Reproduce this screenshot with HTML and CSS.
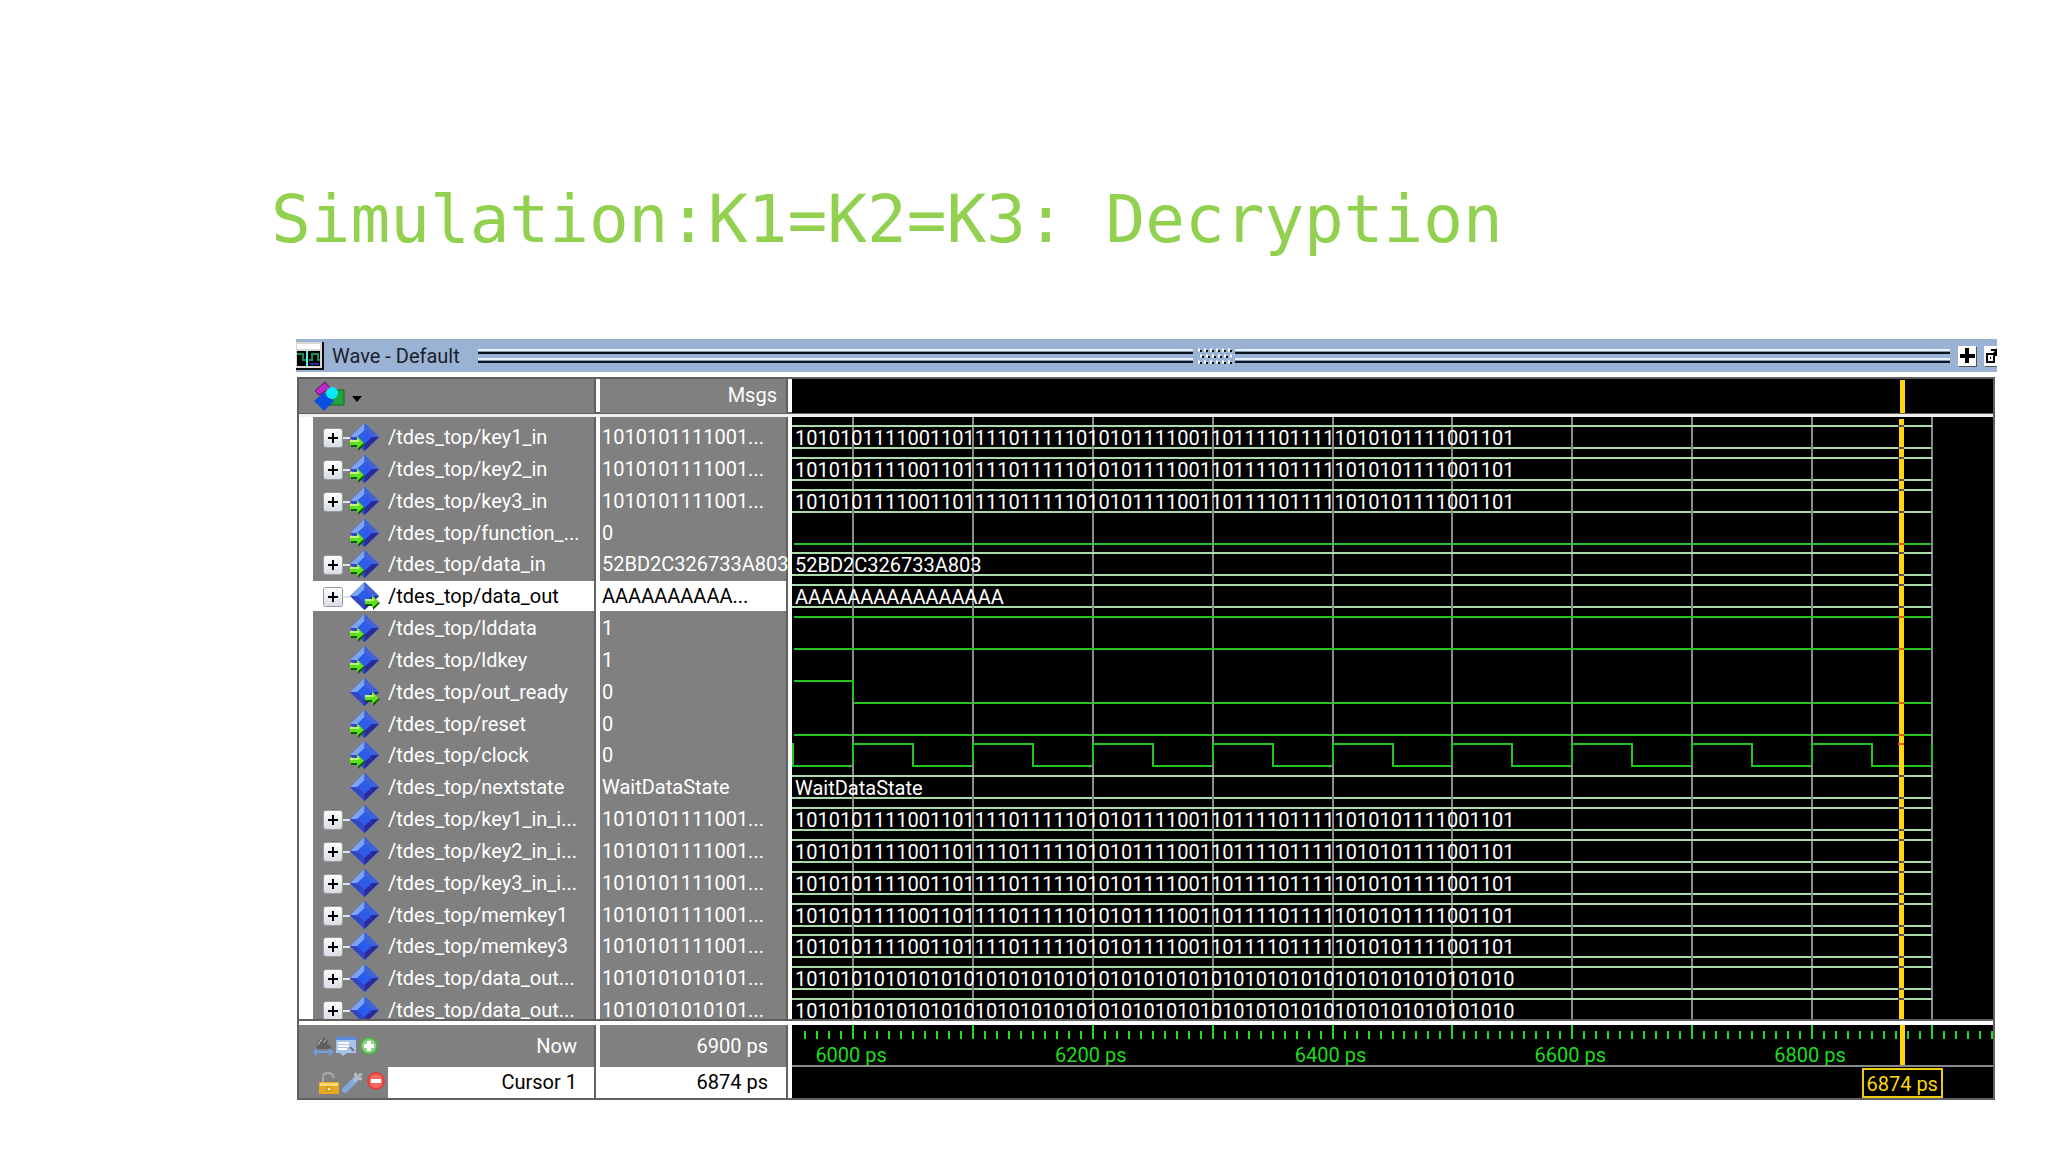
FILE: index.html
```
<!DOCTYPE html>
<html lang="en">
<head>
    <meta charset="UTF-8">
    <meta name="viewport" content="width=device-width, initial-scale=1.0">
    <title>Simulation: Decryption</title>
    <link rel="stylesheet" href="styles.css">
</head>
<body>
    <!-- Shared icons -->
    <svg class="sprite" aria-hidden="true">
        <symbol id="diamond" viewBox="0 0 29 28">
            <path d="M14.5 0L29 14L14.5 28L0 14Z" fill="#2b5cea"/>
            <path d="M14.5 0L0 14L7 14L14.5 7Z" fill="#7fa4f5"/>
            <path d="M14.5 0L29 14L22 14L14.5 7Z" fill="#3f62d8"/>
            <path d="M0 14L14.5 28L14.5 21L7 14Z" fill="#3347c4"/>
            <path d="M29 14L14.5 28L14.5 21L22 14Z" fill="#2a2a9c"/>
        </symbol>
        <symbol id="arrow" viewBox="0 0 15 15">
            <path d="M1 5H7V1L15 8L8 15V11H1Z" fill="#0c5a08"/>
            <path d="M0 4H7V0L14 7L7 13V9H0Z" fill="#5fe01a"/>
            <path d="M0 4H7V2L10 5L8 6H0Z" fill="#c3f77a"/>
        </symbol>
    </svg>

    <main class="slide">
        <h1>Simulation:K1=K2=K3: Decryption</h1>

        <section class="wave-window">
            <header class="titlebar">
                <svg class="app-icon" viewBox="0 0 28 28" aria-hidden="true">
                    <path d="M0 0H28V28H0Z" fill="#111"/>
                    <path d="M0 0H26V26H0Z" fill="#d8d8d4"/>
                    <path d="M1 2H24V7H1Z" fill="#fff"/>
                    <path d="M1 9H24V24H1Z" fill="#000"/>
                    <path d="M1 12H7V18H10M13 18H16V12H22V18H24" fill="none" stroke="#1c8c4c" stroke-width="2"/>
                    <path d="M14 22H23" stroke="#2a2a9c" stroke-width="2"/>
                    <path d="M11 9V24" stroke="#5fe8f0" stroke-width="2"/>
                </svg>
                <span class="title">Wave - Default</span>
                <span class="ridge"></span>
                <svg class="grip" viewBox="0 0 36 16" aria-hidden="true">
                    <path d="M2 2H34M4 8H36M2 14H34" stroke="#fff" stroke-width="3" stroke-dasharray="2 4"/>
                    <path d="M4 3H36M6 9H36M4 15H36" stroke="#111" stroke-width="2" stroke-dasharray="2 4"/>
                </svg>
                <span class="ridge"></span>
                <button class="tool-btn" aria-label="Zoom window">
                    <svg viewBox="0 0 18 20"><path d="M9 2V17M2 10H17" stroke="#000" stroke-width="4"/></svg>
                </button>
                <button class="tool-btn cut" aria-label="Undock window">
                    <svg viewBox="0 0 18 20"><path d="M3 8H10V16H3ZM6 12H7M7 4H13M9 9L12 5V10" fill="none" stroke="#000" stroke-width="2"/></svg>
                </button>
            </header>

            <table class="wave-table">
                <thead>
                    <tr>
                        <th class="name">
                            <button class="menu-btn" aria-label="Signal filter">
                                <svg viewBox="0 0 50 30" aria-hidden="true">
                                    <path d="M17 9H30V24H14Z" fill="#1fa33c" stroke="#0c6a24"/>
                                    <path d="M1 10L11 1L16 7L5 14Z" fill="#c026c8" stroke="#5c0a68"/>
                                    <path d="M10 11L20 20L10 30L0 20Z" fill="#0a50e0"/>
                                    <circle cx="18" cy="12" r="6" fill="#08e8fa"/>
                                    <path d="M38 15H48L43 21Z" fill="#000"/>
                                </svg>
                            </button>
                        </th>
                        <th class="value">Msgs</th>
                        <th class="wave"><i class="cursor-line"></i></th>
                    </tr>
                </thead>
                <tbody id="signals"></tbody>
                <tfoot>
                    <tr class="now-row">
                        <th class="name">
                            <svg class="foot-icons" viewBox="0 0 66 20" aria-hidden="true">
                                <path d="M2 13L5 4L8 6L10 1L14 4L13 8L17 10V13Z" fill="#5e5e62"/>
                                <path d="M4 9L7 4M10 7L12 3" stroke="#c8c8c8"/>
                                <path d="M0 16H18M3 13L0 16L3 19M15 13L18 16L15 19" fill="none" stroke="#6f9fdc" stroke-width="2"/>
                                <path d="M22 2H42V17H33L29 20L26 17H22Z" fill="#a9c4ec"/>
                                <path d="M22 1H42V4H22Z" fill="#5b8be0"/>
                                <path d="M24 7H35M24 10H35M24 13H33" stroke="#fff" stroke-width="2"/>
                                <path d="M36 11L40 15" stroke="#777" stroke-width="2"/>
                                <circle cx="55" cy="10" r="9" fill="#4fb24c"/>
                                <circle cx="55" cy="10" r="7" fill="#8fd488"/>
                                <path d="M55 5V15M50 10H60" stroke="#fff" stroke-width="4"/>
                            </svg>
                            <span>Now</span>
                        </th>
                        <td class="value">6900 ps</td>
                        <td class="wave" id="ruler"><i class="cursor-line"></i></td>
                    </tr>
                    <tr class="cursor-row">
                        <th class="name">
                            <svg class="foot-icons" viewBox="0 0 66 22" aria-hidden="true">
                                <path d="M4 10V5Q4 1 9 1Q14 1 15 6" fill="none" stroke="#a8a8a8" stroke-width="2"/>
                                <path d="M0 10H20V22H0Z" fill="#e9a823"/>
                                <path d="M1 11H19V14H1Z" fill="#fbd872"/>
                                <path d="M8 15H12V19H8Z" fill="#fff0b8" stroke="#b87a10"/>
                                <path d="M26 18L36 8" stroke="#86a8e0" stroke-width="6" stroke-linecap="round"/>
                                <path d="M35 9L39 5M37 1Q35 7 43 7M39 4L43 2" fill="none" stroke="#b4bcc8" stroke-width="3"/>
                                <circle cx="57" cy="9" r="9" fill="#e23c3c"/>
                                <circle cx="57" cy="9" r="7" fill="#f06a62"/>
                                <path d="M52 9H62" stroke="#fff" stroke-width="4"/>
                            </svg>
                            <span>Cursor 1</span>
                        </th>
                        <td class="value">6874 ps</td>
                        <td class="wave"><output class="cursor-tag">6874 ps</output></td>
                    </tr>
                </tfoot>
            </table>
        </section>
    </main>

    <script>
        // visible time range in ps
        const START = 5949;
        const SPAN = 1002;
        const END = 6900;
        const CURSOR = 6874;

        const KEY = '1010101111001101111011111010101111001101111011111010101111001101';
        const ALT = '10'.repeat(32);

        // kind: in / out / net, wave: bus, or level at the start followed by change times
        const signals = [
            { name: 'key1_in', kind: 'in', bus: KEY, value: '1010101111001...' },
            { name: 'key2_in', kind: 'in', bus: KEY, value: '1010101111001...' },
            { name: 'key3_in', kind: 'in', bus: KEY, value: '1010101111001...' },
            { name: 'function_...', kind: 'in', level: 0, edges: [], value: '0' },
            { name: 'data_in', kind: 'in', bus: '52BD2C326733A803', value: '52BD2C326733A803' },
            { name: 'data_out', kind: 'out', bus: 'AAAAAAAAAAAAAAAA', value: 'AAAAAAAAAA...', selected: true },
            { name: 'lddata', kind: 'in', level: 1, edges: [], value: '1' },
            { name: 'ldkey', kind: 'in', level: 1, edges: [], value: '1' },
            { name: 'out_ready', kind: 'out', level: 1, edges: [6000], value: '0' },
            { name: 'reset', kind: 'in', level: 0, edges: [], value: '0' },
            { name: 'clock', kind: 'in', level: 1, edges: [], clock: true, value: '0' },
            { name: 'nextstate', kind: 'net', bus: 'WaitDataState', flat: true, value: 'WaitDataState' },
            { name: 'key1_in_i...', kind: 'net', bus: KEY, value: '1010101111001...' },
            { name: 'key2_in_i...', kind: 'net', bus: KEY, value: '1010101111001...' },
            { name: 'key3_in_i...', kind: 'net', bus: KEY, value: '1010101111001...' },
            { name: 'memkey1', kind: 'net', bus: KEY, value: '1010101111001...' },
            { name: 'memkey3', kind: 'net', bus: KEY, value: '1010101111001...' },
            { name: 'data_out...', kind: 'net', bus: ALT, value: '1010101010101...' },
            { name: 'data_out...', kind: 'net', bus: ALT, value: '1010101010101...' }
        ];

        // clock toggles every 50 ps
        for (let t = START + 1; t <= END; t += 50) {
            signals[10].edges.push(t);
        }

        function plot(signal) {
            let grid = '';
            for (let t = 6000; t <= END; t += 100) {
                grid += `M${t} -8V40`;
            }

            let trace = '';
            let cross = '';
            const hit = y => `M${CURSOR - 2} ${y}h5`;
            if (signal.bus) {
                trace = `M${START} 4H${END}M${START} 26H${END}`;
                cross = hit(4) + hit(26);
            } else {
                let level = signal.level;
                const y = () => level ? 4 : 26;
                trace = `M${signal.clock ? START : START + 2} ${y()}`;
                signal.edges.forEach(t => {
                    trace += `H${t}`;
                    level = 1 - level;
                    trace += `V${y()}`;
                });
                trace += `H${END}`;
                cross = hit(y());
            }

            return `
                <svg class="plot" viewBox="${START} 0 ${SPAN} 32" preserveAspectRatio="none" aria-hidden="true">
                    <path class="grid-line" d="${grid}"/>
                    <path class="${signal.bus ? 'bus-line' : 'logic-line'}" d="${trace}"/>
                    <path class="cursor-mark" d="M${CURSOR + 1} -3V40"/>
                    <path class="${signal.bus ? 'bus-cross' : 'logic-cross'}" d="${cross}"/>
                </svg>`;
        }

        function renderSignals() {
            const body = document.getElementById('signals');
            signals.forEach(signal => {
                const row = document.createElement('tr');
                if (signal.selected) row.className = 'selected';
                const expands = signal.bus && !signal.flat;
                const arrow = signal.kind === 'net' ? '' : `<svg class="arrow ${signal.kind}"><use href="#arrow"/></svg>`;
                row.innerHTML = `
                    <th class="name" scope="row">
                        <span class="tree">${expands ? '<button class="expander" aria-label="Expand"></button><i class="link"></i>' : ''}</span>
                        <span class="icon"><svg class="diamond"><use href="#diamond"/></svg>${arrow}</span>
                        <span class="label">/tdes_top/${signal.name}</span>
                    </th>
                    <td class="value">${signal.value}</td>
                    <td class="wave">${plot(signal)}<span class="bus-text">${signal.bus || ''}</span></td>
                `;
                body.appendChild(row);
            });
        }

        function renderRuler() {
            const ruler = document.getElementById('ruler');
            let ticks = '';
            for (let t = 5960; t < START + SPAN; t += 10) {
                ticks += t % 100 ? `M${t} 6V14` : `M${t} 0V14`;
            }
            let html = `<svg class="plot" viewBox="${START} 0 ${SPAN} 32" preserveAspectRatio="none" aria-hidden="true"><path class="tick" d="${ticks}"/></svg>`;
            for (let t = 6000; t < END; t += 200) {
                html += `<span class="time" style="left: ${(t - START) / SPAN * 100}%">${t} ps</span>`;
            }
            ruler.insertAdjacentHTML('afterbegin', html);
        }

        renderSignals();
        renderRuler();
    </script>
</body>
</html>
```
FILE: styles.css
```
* {
    margin: 0;
    padding: 0;
    box-sizing: border-box;
}

body {
    background-color: #fff;
    font-family: Roboto, Tahoma, sans-serif;
    font-size: 20px;
    color: #fff;
}

button {
    border: none;
    background: none;
    cursor: pointer;
}

.sprite {
    display: none;
}

.slide {
    padding: 180px 51px 40px 296px;
}

h1 {
    margin: 0 0 79px -25px;
    font-family: "DejaVu Sans Mono", Consolas, monospace;
    font-size: 66px;
    font-weight: normal;
    line-height: 80px;
    color: #92d050;
}

/* title bar */
.titlebar {
    display: flex;
    align-items: center;
    height: 33px;
    margin-bottom: 5px;
    background-color: #9ab2d4;
    color: #1a1f2c;
    overflow: hidden;
}

.app-icon {
    width: 28px;
    height: 28px;
    margin-right: 8px;
}

.title {
    margin-right: 18px;
    line-height: 28px;
}

.ridge {
    flex: 1;
    height: 14px;
    background: linear-gradient(#e4f4fa 2px, #7f9cb4 2px 3px, #0c1420 3px 5px, #9ab2d4 5px 9px, #e4f4fa 9px 11px, #7f9cb4 11px 12px, #0c1420 12px);
}

.grip {
    width: 36px;
    height: 16px;
    margin: 0 3px;
}

.tool-btn {
    width: 18px;
    height: 20px;
    margin-left: 8px;
    background-color: #fff;
    box-shadow: 1px 1px 0 #555;
}

.tool-btn svg {
    display: block;
    width: 18px;
    height: 20px;
}

.tool-btn.cut {
    width: 13px;
    overflow: hidden;
}

/* signal table */
.wave-table {
    display: block;
    margin: 0 2px 0 1px;
    border: 2px solid #606060;
}

.wave-table thead,
.wave-table tfoot {
    display: block;
}

.wave-table tr {
    display: grid;
    grid-template-columns: 297px 188px 1fr;
    column-gap: 4px;
    min-height: 0;
}

.wave-table th,
.wave-table td {
    min-width: 0;
    font-weight: normal;
    text-align: left;
    white-space: nowrap;
}

.name,
.value {
    background-color: #808080;
    border-right: 2px solid #606060;
}

.wave {
    position: relative;
    background-color: #000;
}

.wave-table thead {
    border-bottom: 2px solid #606060;
}

.wave-table thead tr {
    height: 33px;
}

.wave-table thead .name {
    padding: 2px 15px;
}

.wave-table thead .value {
    padding-right: 9px;
    line-height: 32px;
    text-align: right;
}

.menu-btn,
.menu-btn svg {
    display: block;
    width: 50px;
    height: 30px;
}

.wave-table tbody {
    display: grid;
    grid-template-rows: repeat(18, 1fr) 24px;
    height: 605px;
    padding-top: 5px;
    background: linear-gradient(to right, #fff 14px, #808080 14px 295px, #606060 295px 297px, #fff 297px 301px, #808080 301px 487px, #606060 487px 489px, #fff 489px 493px, #000 493px);
    border-top: 3px solid #f0f0f0;
    overflow: hidden;
}

.wave-table tbody .name {
    display: flex;
    border-left: 14px solid #fff;
    height: 30px;
}

.wave-table tbody .value {
    height: 30px;
    padding-left: 2px;
    line-height: 30px;
}

.wave-table .selected .name,
.wave-table .selected .value {
    background-color: #fff;
    color: #000;
}

.tree {
    display: flex;
    align-items: center;
    width: 37px;
    padding: 2px 0 0 11px;
}

.expander {
    position: relative;
    width: 18px;
    height: 18px;
    border-radius: 2px;
    background: linear-gradient(#fff, #d8dce4);
    box-shadow: 0 0 0 1px #9a9a9e;
}

.expander::before,
.expander::after {
    content: "";
    position: absolute;
    background-color: #000;
}

.expander::before {
    left: 4px;
    top: 8px;
    width: 10px;
    height: 2px;
}

.expander::after {
    left: 8px;
    top: 4px;
    width: 2px;
    height: 10px;
}

.link {
    flex: 1;
    height: 2px;
    background-color: #e4e4e4;
}

.icon {
    position: relative;
    width: 38px;
    height: 28px;
    margin-top: 1px;
}

.diamond {
    width: 29px;
    height: 28px;
}

.arrow {
    position: absolute;
    top: 13px;
    width: 15px;
    height: 15px;
}

.arrow.in {
    left: 0;
}

.arrow.out {
    left: 15px;
}

.label {
    line-height: 30px;
}

.plot {
    position: absolute;
    left: 0;
    top: 0;
    width: 100%;
    height: 32px;
    overflow: visible;
}

.plot path {
    fill: none;
    stroke-width: 2px;
    vector-effect: non-scaling-stroke;
    shape-rendering: crispEdges;
}

.plot .grid-line {
    stroke: #8a8a8a;
}

.plot .bus-line {
    stroke: #a8dca8;
}

.plot .logic-line {
    stroke: #22c422;
}

.plot .cursor-mark {
    stroke: #ffd60a;
    stroke-width: 5px;
}

.plot .bus-cross {
    stroke: #6a4a50;
}

.plot .logic-cross {
    stroke: #f0561c;
}

.plot .tick {
    stroke: #1fdc1f;
}

.bus-text {
    position: relative;
    padding-left: 3px;
    line-height: 32px;
}

.cursor-line {
    position: absolute;
    left: calc(92.4% - 2px);
    top: 1px;
    bottom: 0;
    width: 5px;
    background-color: #ffd60a;
}

/* footer */
.wave-table tfoot {
    border-top: 2px solid #606060;
}

.wave-table tfoot .name {
    display: flex;
    align-items: center;
}

.wave-table tfoot .name span {
    flex: 1;
    padding-right: 17px;
    text-align: right;
}

.wave-table tfoot .value {
    padding-right: 18px;
    text-align: right;
}

.wave-table .now-row {
    height: 46px;
    border-top: 4px solid #fff;
    line-height: 42px;
}

.now-row .foot-icons {
    width: 66px;
    height: 20px;
    margin-left: 15px;
}

.now-row .wave {
    border-bottom: 2px solid #8a8a8a;
}

.time {
    position: absolute;
    top: 12px;
    width: 80px;
    margin-left: -42px;
    line-height: 36px;
    text-align: center;
    color: #1fdc1f;
}

.now-row .cursor-line {
    top: 0;
}

.cursor-row {
    height: 31px;
    line-height: 31px;
}

.cursor-row .foot-icons {
    width: 66px;
    height: 22px;
    margin: 0 3px 0 20px;
}

.cursor-row .name span,
.cursor-row .value {
    background-color: #fff;
    color: #000;
}

.cursor-tag {
    position: absolute;
    left: 92.4%;
    top: 1px;
    width: 81px;
    height: 30px;
    margin-left: -40px;
    border: 2px solid #f0cc10;
    line-height: 28px;
    text-align: center;
    color: #ffd60a;
}
```
